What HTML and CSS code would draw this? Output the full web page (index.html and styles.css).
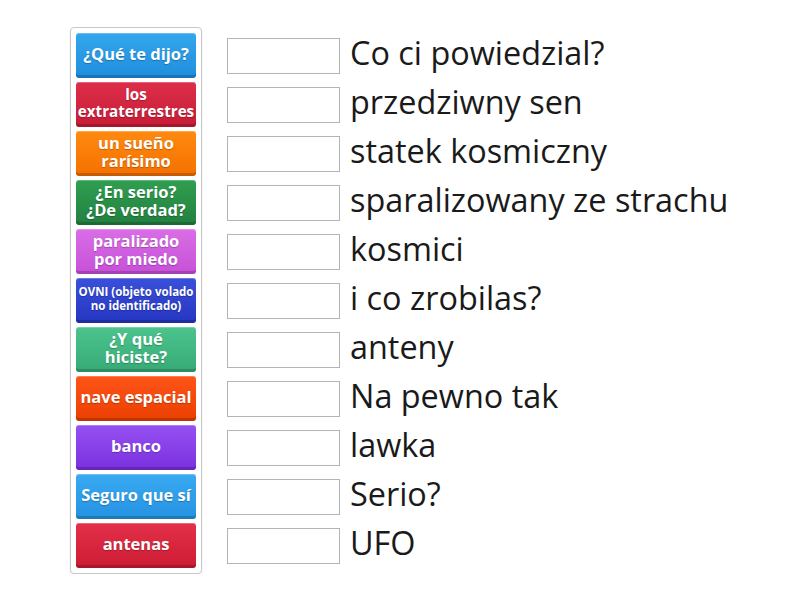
FILE: index.html
```html
<!DOCTYPE html>
<html lang="es">
	<head>
		<meta charset="utf-8">
		<title>Match up</title>
		<link rel="stylesheet" href="styles.css">
	</head>
	<body>
		<div id="content">
			<div id="tiles">
				<div class="tile blue">¿Qué te dijo?</div>
				<div class="tile red small">los<br>extraterrestres</div>
				<div class="tile orange">un sueño<br>rarísimo</div>
				<div class="tile green">¿En serio?<br>¿De verdad?</div>
				<div class="tile pink">paralizado<br>por miedo</div>
				<div class="tile navy tiny">OVNI (objeto volado<br>no identificado)</div>
				<div class="tile mint">¿Y qué<br>hiciste?</div>
				<div class="tile flame">nave espacial</div>
				<div class="tile purple">banco</div>
				<div class="tile sky">Seguro que sí</div>
				<div class="tile crimson">antenas</div>
			</div>
			<div id="targets">
				<div class="row"><div class="slot"></div><span class="label">Co ci powiedzial?</span></div>
				<div class="row"><div class="slot"></div><span class="label">przedziwny sen</span></div>
				<div class="row"><div class="slot"></div><span class="label">statek kosmiczny</span></div>
				<div class="row"><div class="slot"></div><span class="label">sparalizowany ze strachu</span></div>
				<div class="row"><div class="slot"></div><span class="label">kosmici</span></div>
				<div class="row"><div class="slot"></div><span class="label">i co zrobilas?</span></div>
				<div class="row"><div class="slot"></div><span class="label">anteny</span></div>
				<div class="row"><div class="slot"></div><span class="label">Na pewno tak</span></div>
				<div class="row"><div class="slot"></div><span class="label">lawka</span></div>
				<div class="row"><div class="slot"></div><span class="label">Serio?</span></div>
				<div class="row"><div class="slot"></div><span class="label">UFO</span></div>
			</div>
		</div>
	</body>
</html>
```

FILE: styles.css
```css
body {
	margin: 0;
	background: #fff;
	font-family: "Open Sans", "Noto Sans", sans-serif;
}
#content {
	display: flex;
	align-items: flex-start;
	gap: 25px;
	padding: 27px 0 0 70px;
}
#tiles {
	display: flex;
	flex-direction: column;
	gap: 4px;
	padding: 5px;
	border: 1px solid #c8c8c8;
	border-radius: 4px;
	box-shadow: 0 1px 2px rgba(0, 0, 0, 0.12);
}
.tile {
	box-sizing: border-box;
	width: 120px;
	height: 45px;
	padding: 0 1px 3px;
	display: flex;
	align-items: center;
	justify-content: center;
	text-align: center;
	color: #fff;
	font-weight: 700;
	font-size: 16.5px;
	line-height: 18px;
	white-space: nowrap;
	border-radius: 3px;
	text-shadow: 0 1px 1px rgba(0, 0, 0, 0.25);
	box-shadow: inset 0 1px 0 rgba(255, 255, 255, 0.25), inset 0 -3px 0 rgba(0, 0, 0, 0.18);
}
.tile.small {
	font-size: 15.2px;
	line-height: 17px;
}
.tile.tiny {
	font-size: 11.5px;
	line-height: 14px;
}
.blue { background: linear-gradient(#34a6ee, #1f8ddc); }
.red { background: linear-gradient(#dc2e48, #c81c36); }
.orange { background: linear-gradient(#ff8a10, #f47000); }
.green { background: linear-gradient(#2f9f50, #237f40); }
.pink { background: linear-gradient(#da6ee6, #c650d8); }
.navy { background: linear-gradient(#3a50da, #2536c2); }
.mint { background: linear-gradient(#4cc48e, #36aa76); }
.flame { background: linear-gradient(#ff5418, #ea4000); }
.purple { background: linear-gradient(#9650f0, #7a30e0); }
.sky { background: linear-gradient(#3aaaf2, #2492e2); }
.crimson { background: linear-gradient(#e4304a, #cc1c34); }
#targets {
	display: flex;
	flex-direction: column;
	gap: 4px;
	padding-top: 6px;
}
.row {
	height: 45px;
	display: flex;
	align-items: center;
	gap: 10px;
}
.slot {
	width: 111px;
	height: 34px;
	border: 1px solid #b4b4b4;
	background: #fff;
}
.label {
	font-size: 32.4px;
	color: #1a1a1a;
	white-space: nowrap;
	margin-bottom: 8px;
}
```
